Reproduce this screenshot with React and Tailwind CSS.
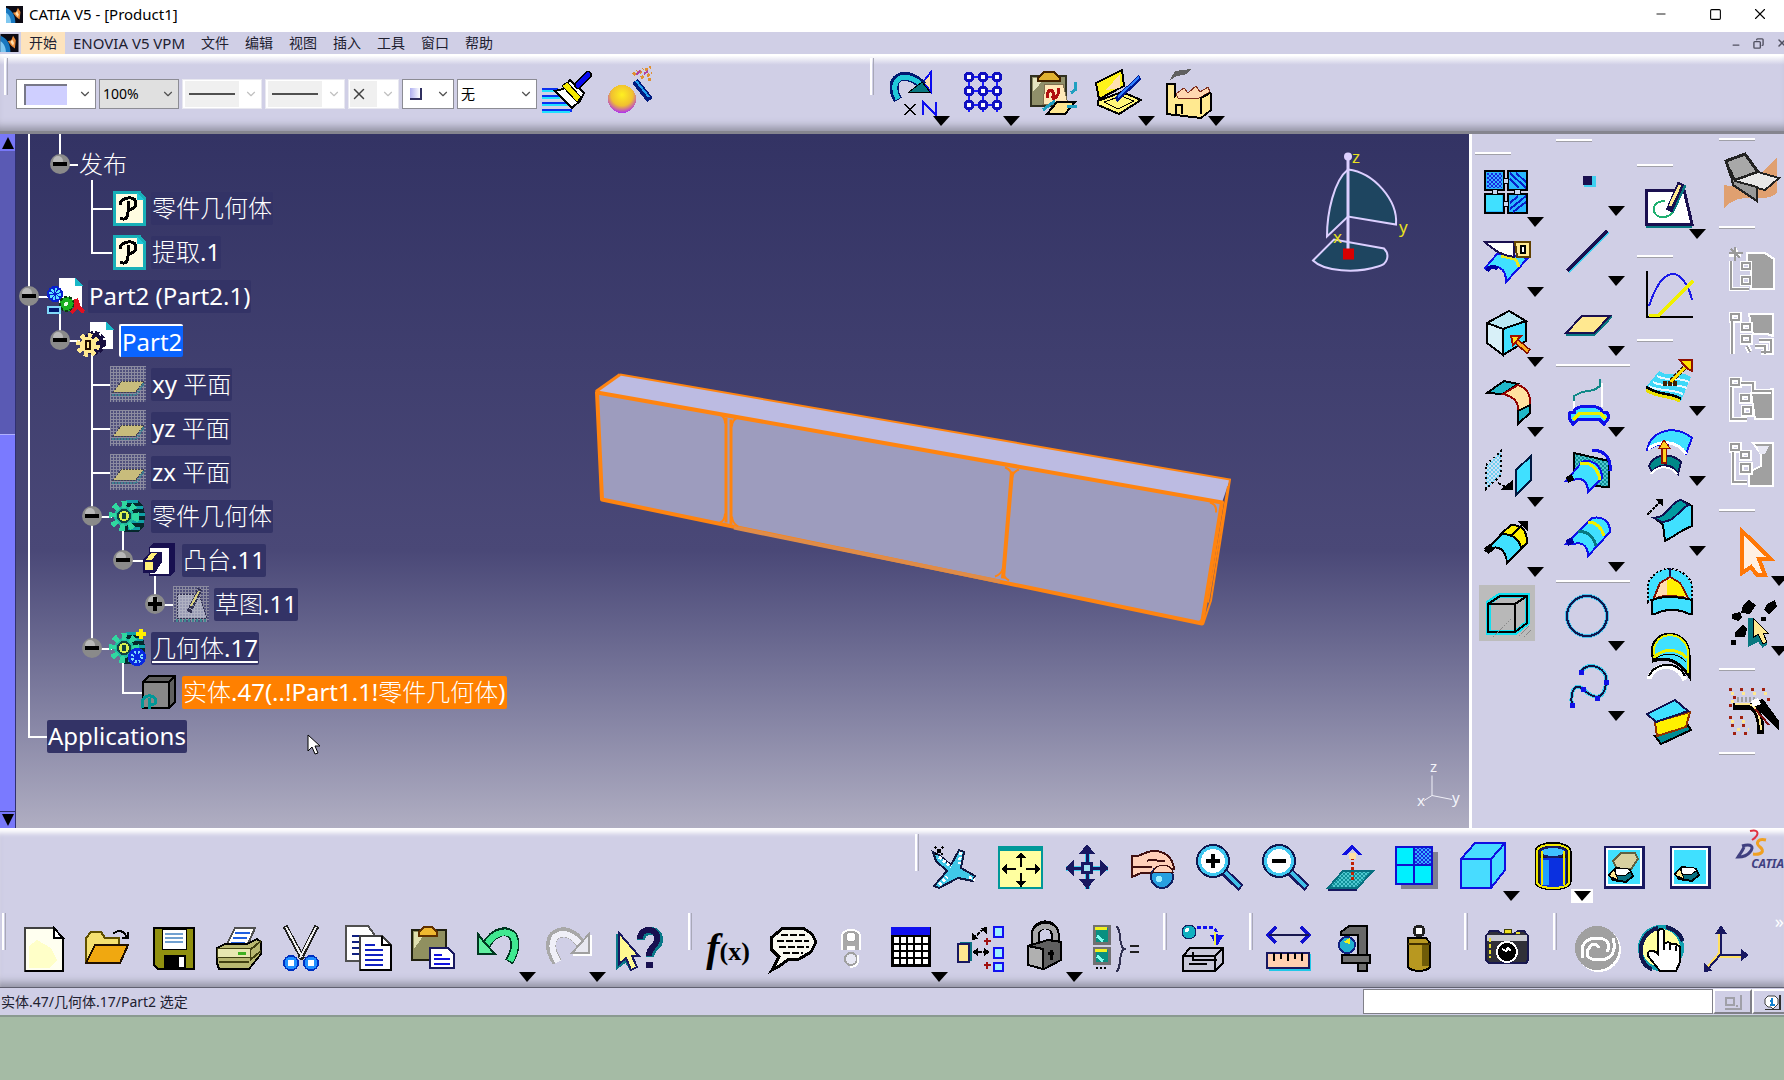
import React, { useState } from 'react';
import { ChevronDown, Copy, Minus, Square, X } from 'lucide-react';
import clsx from 'clsx';

// Every drawing lives on a 48x48 grid
const icons = {
  // --- graphic properties ---
  brush: (
    <>
      <path d="M2 20h16M2 27h18M2 34h26M2 41h30" stroke="#0a30f0" strokeWidth="3" />
      <path d="M2 22h14M2 29h18M2 36h26M2 43h28" stroke="#20e0ff" strokeWidth="2" />
      <path d="M15 22l8-2 7-9 14 13-4 8-8 7z" fill="#fff" stroke="#000" strokeWidth="2" />
      <path d="M22 17l15 16 4-5-14-15z" fill="#f4e800" stroke="#000" />
      <path d="M38 16l10-10" stroke="#000" strokeWidth="8" strokeLinecap="round" />
      <path d="M38 16l10-10" stroke="#0a0af0" strokeWidth="5" strokeLinecap="round" />
    </>
  ),
  wand: (
    <>
      <circle cx="17" cy="30" r="14" fill="url(#ball)" />
      <path d="M30 12l15 19" stroke="#001a80" strokeWidth="7" />
      <path d="M31 12l13 16" stroke="#20a0f0" strokeWidth="2" />
      <path d="M28 6l4-4M34 4l4-4M40 1l6-3M36 9l4-3M42 7l5-3M43 11l4-1" stroke="#e09030" strokeWidth="3" strokeDasharray="3 2" />
      <path d="M31 6l4-4M39 5l4-3" stroke="#b040a0" strokeWidth="2" />
    </>
  ),
  // --- tools ---
  repeat: (
    <>
      <path d="M34 14l8-10v20z" fill="#ffe0b0" stroke="#0a0af0" strokeWidth="2" />
      <path d="M9 32C-3 12 14-2 34 18" fill="none" stroke="#001870" strokeWidth="9" />
      <path d="M9 31C-1 12 14 0 34 18" fill="none" stroke="#20c8d8" strokeWidth="5" />
      <path d="M20 24h21l-8-10z" fill="#087880" stroke="#000" />
      <path d="M16 36l10 11M26 36l-10 11" stroke="#000" strokeWidth="1.5" />
      <path d="M34 47V34l13 13V34" fill="none" stroke="#1010f0" strokeWidth="2" />
    </>
  ),
  grid: (
    <>
      <path d="M10 4v40M24 4v40M38 4v40M5 9h38M5 23h38M5 37h38" stroke="#1a1aff" strokeWidth="2" />
      {[10, 24, 38].map((x) => [9, 23, 37].map((y) => <circle key={`${x}-${y}`} cx={x} cy={y} r="4" fill="#fff" stroke="#1010c0" strokeWidth="3" />))}
    </>
  ),
  catalog: (
    <>
      <path d="M2 8h35v30H2z" fill="#90906a" stroke="#303020" strokeWidth="2" />
      <path d="M4 10h12L4 24z" fill="#e4e4c0" />
      <path d="M9 10l6-6h10l6 6v3H9z" fill="#e0b030" stroke="#402000" strokeWidth="2" />
      <path d="M16 16h18l5 20H14z" fill="#ffe8b8" stroke="#807050" />
      <path d="M18 30c0-12 8-8 6-2s8 0 5-8" fill="none" stroke="#b01010" strokeWidth="3" />
      <path d="M18 46l10-12h18l-10 12z" fill="#ffe890" stroke="#000" strokeWidth="2" />
      <path d="M14 42l12-9M46 14v8l-4 3M38 38h10" stroke="#20a0c0" strokeWidth="3" fill="none" />
    </>
  ),
  workSupport: (
    <>
      <path d="M2 15L28 2l2 16L5 31z" fill="#fff31a" stroke="#000" strokeWidth="2" />
      <path d="M12 22L26 6v14z" fill="#ffe0b0" />
      <path d="M4 33l24-9 19 8-22 14L4 37z" fill="#fff678" stroke="#000" strokeWidth="2" />
      <path d="M10 34l17-6 13 5-16 8z" fill="none" stroke="#000" strokeWidth="1" />
      <path d="M22 32L46 9" stroke="#001890" strokeWidth="5" />
      <path d="M24 29L45 9" stroke="#3080ff" strokeWidth="2" />
    </>
  ),
  factory: (
    <>
      <path d="M6 12l5-9 16-2-4 5-10 2z" fill="#606060" />
      <path d="M3 46V16h8v12l8-6 4 6 8-8 4 8 8-6 4 4v16l-10 8z" fill="#ffe990" stroke="#000" strokeWidth="2" />
      <path d="M12 26l8-6 4 5 8-7 4 6 8-5 2 5-11 6H14z" fill="#ffd8b0" stroke="#803020" />
      <path d="M37 46V30l9-5M12 46v-9h6v9" fill="none" stroke="#000" strokeWidth="2" />
    </>
  ),
  // --- right hand panel ---
  puzzle: (
    <>
      <path d="M2 2h19v19H2zM25 2h19v19H25zM2 25h19v19H2zM25 25h19v19H25z" fill="#28b8ff" stroke="#000" strokeWidth="2" />
      <path d="M4 4h15v15H4z" fill="url(#weave)" />
      <path d="M27 4l16 15M33 4l10 9M27 10l9 9M27 40l16-13M30 43l13-10M27 34l8-7" stroke="#0820c8" strokeWidth="2" />
      <path d="M3 26h16v16H3z" fill="#40e0ff" />
      <path d="M20 9h5v5h-5zM31 20h6v5h-6zM9 20h5v5H9zM20 32h5v5h-5z" fill="#c8d8f0" stroke="#000" />
    </>
  ),
  split: (
    <>
      <path d="M2 29l12-14 31 4-22 24c0-16-10-16-14-14l-5 2z" fill="#40e0ff" stroke="#1010e8" strokeWidth="2" />
      <path d="M18 17l14 3c3 3 3 6 4 8" fill="none" stroke="#e8e820" strokeWidth="3" />
      <path d="M2 3h29v15C18 16 12 12 2 3z" fill="#fff" stroke="#1a1050" strokeWidth="2" />
      <path d="M32 3h15v15H34z" fill="#ffe990" stroke="#604000" strokeWidth="2" />
      <path d="M38 7h4v7h-4z" fill="#fff" stroke="#000" strokeWidth="2" />
      <path d="M4 32c3-5 8-5 11-2" fill="none" stroke="#0000a0" strokeWidth="4" />
    </>
  ),
  extract: (
    <>
      <path d="M4 14L26 2l17 10v20L20 46 4 34z" fill="#40e0ff" stroke="#000" strokeWidth="2" />
      <path d="M4 14L26 2l17 10-23 8z" fill="#b8e8f4" stroke="#000" strokeWidth="2" />
      <path d="M4 14l16 6v26L4 34z" fill="#d8f0f8" stroke="#000" strokeWidth="2" />
      <path d="M46 43L32 31" stroke="#801000" strokeWidth="6" />
      <path d="M45 42L32 31" stroke="#ffb020" strokeWidth="3" />
      <path d="M28 27h10l-8 9z" fill="#ffe020" stroke="#a01000" strokeWidth="2" />
    </>
  ),
  boundary: (
    <>
      <path d="M4 14L21 2l14 3-15 10z" fill="#20b8c8" stroke="#000" strokeWidth="2" />
      <path d="M20 15L35 6c12 4 13 15 12 20L35 32c1-8-3-14-15-17z" fill="#ffe0a0" stroke="#900000" strokeWidth="2" />
      <path d="M35 32l12-6v8L35 45z" fill="#20b8c8" stroke="#000" strokeWidth="2" />
    </>
  ),
  symmetry: (
    <>
      <path d="M3 16L18 2v24L3 40z" fill="url(#weaveLight)" stroke="#000" strokeWidth="2" strokeDasharray="2 3" />
      <path d="M33 21L48 7v24L33 46z" fill="#40e0ff" stroke="#001840" strokeWidth="2" />
      <path d="M15 34l8 4" stroke="#000" strokeWidth="2" strokeDasharray="3 2" />
      <path d="M20 40h9V33z" fill="#000" stroke="#000" strokeWidth="2" />
    </>
  ),
  extrapolate: (
    <>
      <path d="M2 32L28 6c10 0 16 4 16 18L24 44c-1-14-10-18-16-14z" fill="#40e0ff" stroke="#000" strokeWidth="2" />
      <path d="M18 15L28 6c10 0 16 4 16 18l-6 5c-2-10-10-14-20-14z" fill="#fff000" stroke="#000" strokeWidth="2" />
      <path d="M28 17L40 5" stroke="#000" strokeWidth="2" />
      <path d="M34 2h11v11z" fill="#000" />
      <path d="M3 32l6-4" stroke="#000" strokeWidth="7" />
    </>
  ),
  solid: (
    <>
      <path d="M5 14L17 6h27v28L33 43H5z" fill="#b8b8b8" stroke="#10e0f0" strokeWidth="5" />
      <path d="M5 15h27v28H5zM5 15L17 7h27v27L32 43M32 15L44 7" fill="none" stroke="#000" strokeWidth="2" />
      <path d="M10 48l18-18M36 47l10-10M41 48l8-8" stroke="#888" strokeDasharray="2 1" />
    </>
  ),
  point: (
    <>
      <path d="M20 18h12v11H20z" fill="#40d0f0" />
      <path d="M19 18h9v9h-9z" fill="#1a1050" />
    </>
  ),
  line: (
    <>
      <path d="M4 44L44 4" stroke="#40d0f0" strokeWidth="4" />
      <path d="M3 43L43 3" stroke="#1a1050" strokeWidth="3" />
    </>
  ),
  plane: (
    <>
      <path d="M2 36h28L47 18" fill="none" stroke="#087880" strokeWidth="4" />
      <path d="M2 35L18 18h28L30 35z" fill="#ffe890" stroke="#1a1050" strokeWidth="2" />
    </>
  ),
  sweep: (
    <>
      <path d="M10 23v-6l8-4 12-2 6-4V0" fill="none" stroke="#108888" strokeWidth="2" />
      <path d="M10 22v12M38 4v24" stroke="#fff" strokeWidth="2" />
      <path d="M6 33h4c0-8 28-8 28 0h5c3 5 1 8-3 12l-5-5H14l-5 5c-4-4-5-8-3-12z" fill="#40e0ff" stroke="#1010e8" strokeWidth="3" />
      <path d="M9 41l7-7h20l6 6" fill="none" stroke="#e8f000" strokeWidth="3" />
    </>
  ),
  join: (
    <>
      <path d="M10 4l35 8v26l-16-1L10 26z" fill="url(#teal)" stroke="#000" strokeWidth="2" />
      <path d="M28 2c8-2 20 4 18 20" fill="none" stroke="#1010e8" strokeWidth="3" />
      <path d="M2 32L18 13c10-4 20 4 20 16L24 43c0-12-8-15-14-12z" fill="#40e0ff" stroke="#1010e8" strokeWidth="2" />
      <path d="M16 15c10-3 18 4 20 16" fill="none" stroke="#f0f000" strokeWidth="3" />
      <path d="M3 31l6-3" stroke="#000" strokeWidth="6" />
    </>
  ),
  offset: (
    <>
      <path d="M2 30L28 4c10-2 18 2 18 14L24 42c0-12-8-14-14-12z" fill="#40e0ff" stroke="#1010e8" strokeWidth="2" />
      <path d="M14 18c10-2 16 6 18 14" fill="none" stroke="#087880" strokeWidth="3" />
      <path d="M24 8c8 0 14 6 16 14" fill="none" stroke="#f0f000" strokeWidth="3" />
      <path d="M3 29l6-3" stroke="#0000a0" strokeWidth="6" />
    </>
  ),
  circle: (
    <>
      <circle cx="23" cy="23" r="20" fill="none" stroke="#50c8f0" strokeWidth="4" />
      <circle cx="23" cy="23" r="20" fill="none" stroke="#101850" strokeWidth="2" />
    </>
  ),
  spline: (
    <>
      <path d="M17 9C24-4 46 6 42 20 40 38 30 36 20 27S6 30 8 43" fill="none" stroke="#40d0f0" strokeWidth="4" />
      <path d="M17 9C24-4 46 6 42 20 40 38 30 36 20 27S6 30 8 43" fill="none" stroke="#101040" strokeWidth="2" />
      <path d="M15 7h5v5h-5zM40 17h5v5h-5zM31 33h5v5h-5zM17 24h5v5h-5zM6 40h5v5H6z" fill="#1010e8" />
    </>
  ),
  sketch: (
    <>
      <path d="M1 9h38l8 34H1z" fill="#fff" stroke="#1a1050" strokeWidth="3" />
      <path d="M1 46h46" stroke="#087880" strokeWidth="2" />
      <path d="M20 20c-16 0-14 18 0 16 4-1 7-3 8-6" fill="none" stroke="#20b070" strokeWidth="2" />
      <path d="M25 30L38 3" stroke="#087880" strokeWidth="8" />
      <path d="M24 30L36 2" stroke="#1a1050" strokeWidth="7" />
      <path d="M25 25L35 4" stroke="#ffe990" strokeWidth="3" />
    </>
  ),
  law: (
    <>
      <path d="M2 1v46h46" fill="none" stroke="#000" strokeWidth="2" />
      <path d="M4 36C12 12 20 4 28 4s16 12 19 26" fill="none" stroke="#1a1ae8" strokeWidth="2" />
      <path d="M4 45h10L48 11" fill="none" stroke="#f0f000" strokeWidth="3" />
    </>
  ),
  extrude: (
    <>
      <path d="M1 29L14 13c10 8 20-3 32 6L36 43C24 35 14 40 1 29z" fill="#40d8f8" />
      <path d="M8 24c10 6 20 0 34 6M12 18c10 6 20 0 32 6M4 28c10 6 20 2 34 8" fill="none" stroke="#e8f8ff" strokeWidth="2" />
      <path d="M1 29c12 9 22 5 35 12" fill="none" stroke="#000" strokeWidth="3" />
      <path d="M1 32c12 8 22 5 34 11" fill="none" stroke="#e8e000" strokeWidth="3" />
      <path d="M18 25h14M26 23L42 7" stroke="#402000" strokeWidth="5" strokeDasharray="4 1" />
      <path d="M26 24L42 7" stroke="#ffe000" strokeWidth="3" />
      <path d="M35 2h12v11l-4-2-5-5z" fill="#ffe000" stroke="#901000" strokeWidth="2" />
    </>
  ),
  thick: (
    <>
      <path d="M2 22C6 2 30-4 47 10l-6 16C34 14 18 12 2 22z" fill="#40e0ff" stroke="#1010e8" strokeWidth="2" />
      <path d="M3 21c12-10 30-8 38 5" fill="none" stroke="#fff" strokeWidth="3" />
      <path d="M4 38c4-12 22-14 32-4l-3 12c-4-10-18-12-26-2z" fill="#008888" stroke="#101050" strokeWidth="2" />
      <path d="M6 46c8-10 20-8 26 0" fill="none" stroke="#fff" strokeWidth="2" />
      <path d="M19 36V18" stroke="#901000" strokeWidth="6" />
      <path d="M19 34V18" stroke="#ffd020" strokeWidth="3" />
      <path d="M14 20l5-8 6 8z" fill="#ffd020" stroke="#901000" />
    </>
  ),
  sweptSurface: (
    <>
      <path d="M10 20C24 19 24 4 36 2l11 6v20C36 32 30 38 20 43l-2-16z" fill="#40e0ff" stroke="#000" strokeWidth="2" />
      <path d="M9 20C24 19 24 4 36 2l8 5C34 11 30 24 17 24z" fill="#009aa0" stroke="#101050" strokeWidth="2" />
      <path d="M2 17L15 4" stroke="#000" strokeWidth="2" strokeDasharray="3 1" />
      <path d="M10 1h8v8z" fill="#000" />
    </>
  ),
  fill: (
    <>
      <path d="M3 34V16C10-4 38-4 47 16v18l-8-6H11z" fill="#40e0ff" stroke="#000" strokeWidth="2" strokeDasharray="2 2" />
      <path d="M25 0v10" stroke="#101050" strokeWidth="2" />
      <path d="M8 32L15 15l10-6 10 6 9 17c-10-6-26-6-36 0z" fill="#ffdcb0" stroke="#801000" strokeWidth="2" />
      <path d="M22 27V12l5-1 8 5 6 12z" fill="#fff000" />
      <path d="M7 32c10-4 26-4 40 0v14c-8 0-6-4-20-4s-12 4-20 4z" fill="#40e0ff" stroke="#000" strokeWidth="2" />
    </>
  ),
  blend: (
    <>
      <path d="M8 24C2-6 44-6 44 22v21C34 28 22 23 8 28z" fill="#40e0ff" stroke="#000" strokeWidth="3" />
      <path d="M9 22C6-4 42-4 43 20v20" fill="none" stroke="#e8f000" strokeWidth="2" />
      <path d="M9 25c8-10 24-10 33 0" fill="none" stroke="#e8f000" strokeWidth="3" />
      <path d="M9 27c8-8 24-8 32 2" fill="none" stroke="#000" strokeWidth="1" />
      <path d="M4 46c4-16 28-18 36 1" fill="none" stroke="#fff" strokeWidth="5" />
      <path d="M4 43c6-14 28-16 36 0" fill="none" stroke="#000" strokeWidth="2" />
    </>
  ),
  multiSection: (
    <>
      <path d="M10 38l32-12 4 6-30 14z" fill="#008c94" stroke="#000" strokeWidth="2" />
      <path d="M10 24l35-10-4 15-29 9z" fill="#fff000" stroke="#903000" strokeWidth="2" />
      <path d="M2 16L30 2l13 11-32 11z" fill="#40e0ff" stroke="#101050" strokeWidth="2" />
    </>
  ),
  workbench: (
    <>
      <path d="M-3 52V28L20 32 50 0v36C38 48 10 32-3 52z" fill="#e0a070" />
      <path d="M-1 4L18-3l13 18L6 24z" fill="#a8a8a8" stroke="#222" strokeWidth="3" />
      <path d="M6 24l25-9 21 6-14 12-16-4z" fill="#e8e8e8" stroke="#222" strokeWidth="2" />
      <path d="M3 12l5 12 22 6v14L6 28z" fill="#999" stroke="#222" strokeWidth="2" />
    </>
  ),
  diskNew: (
    <>
      <path d="M20 8h18l9 6v30H24V22h-4z" fill="#a0a0a0" stroke="#fff" strokeWidth="2" />
      <path d="M4 16v28h18M8 4l3 6M2 10h12M15 18h8v6h-8zM15 32h8v7h-8z" fill="#d0cfe6" stroke="#fff" strokeWidth="4" />
      <path d="M4 16v28h18M8 2v14M2 8h14M4 4l9 9M15 18h8v6h-8zM15 32h8v7h-8z" fill="none" stroke="#9a9a9a" strokeWidth="2" />
    </>
  ),
  diskLink: (
    <>
      <path d="M22 4h24v22l-6-2H26z" fill="#a0a0a0" stroke="#fff" strokeWidth="2" />
      <path d="M4 4h8v6H4zM5 10v34M15 14h8v6h-8zM15 26h8v6h-8zM20 36l3 6M32 30h12v12H34M28 36h10v8" fill="none" stroke="#fff" strokeWidth="5" />
      <path d="M4 4h8v6H4zM5 10v34M15 14h8v6h-8zM15 26h8v6h-8zM20 36l3 6M32 30h12v12H34M28 36h10v8" fill="none" stroke="#9a9a9a" strokeWidth="2" />
    </>
  ),
  diskOpen: (
    <>
      <path d="M24 18l22-4v30H28z" fill="#a0a0a0" stroke="#fff" strokeWidth="2" />
      <path d="M4 4h8v6H4zM4 12v32h16M14 20h8v6h-8zM16 32h8v7h-8zM14 8h12v8h18" fill="none" stroke="#fff" strokeWidth="5" />
      <path d="M4 4h8v6H4zM4 12v32h16M14 20h8v6h-8zM16 32h8v7h-8zM14 8h12v8h18" fill="none" stroke="#9a9a9a" strokeWidth="2" />
    </>
  ),
  diskSave: (
    <>
      <path d="M26 3h20v43H22V32l12-6V14z" fill="#a0a0a0" stroke="#fff" strokeWidth="2" />
      <path d="M30 6h12l-4 8h-5z" fill="#e8e8f4" />
      <path d="M4 4h8v6H4zM6 12v30h14M14 12h8v6h-8zM14 24h9v8h-9z" fill="none" stroke="#fff" strokeWidth="5" />
      <path d="M4 4h8v6H4zM6 12v30h14M14 12h8v6h-8zM14 24h9v8h-9z" fill="none" stroke="#9a9a9a" strokeWidth="2" />
    </>
  ),
  select: <path d="M15 3v42l9-6 6 8h8l-6-16h12z" fill="#fff0e4" stroke="#ff7808" strokeWidth="4" />,
  selectAll: (
    <>
      <path d="M22 2l7 5-6 9-9-1 2-8zM40 6l8-4 2 6-8 9-5-5zM5 16l8-2 2 5-4 4-6-2zM8 34l8-7 4 4-2 8H8zM4 42h5v5H4zM34 19h5v4h-5z" fill="#000" />
      <path d="M24 20v24l8-4 6 8" fill="none" stroke="#087880" strokeWidth="6" />
      <path d="M26 20v20l5-4 5 10 4-2-4-9h5z" fill="#ffe990" stroke="#000" strokeWidth="1" />
    </>
  ),
  sparkle: (
    <>
      <path d="M2 2h40M6 10h8M2 18h4M40 12h8M2 30h22M4 38h16M6 46h18" stroke="#a02010" strokeWidth="3" strokeDasharray="3 8" />
      <path d="M4 6h38M4 34h20M10 42h12M4 14h8" stroke="#ffe890" strokeWidth="3" strokeDasharray="3 8" />
      <path d="M10 12h20" stroke="#a0a0a0" strokeWidth="5" strokeDasharray="2 2" />
      <path d="M6 19h16c8 2 12 12 12 28" fill="none" stroke="#000" strokeWidth="7" />
      <path d="M8 17h14c8 2 11 12 12 26" fill="none" stroke="#ffe890" strokeWidth="2" />
      <path d="M26 14l10-2 16 22v10L30 22z" fill="#000" />
      <path d="M24 14l7-3 3 6-8 3z" fill="#fff" />
      <path d="M28 22l14 16" stroke="#801010" strokeWidth="2" />
    </>
  ),
  // --- view ---
  fly: (
    <>
      <path d="M2 9l6 3 12 10 8-15 5 2-3 16 14 8-2 5-15-3L8 45l-5-2 13-15L5 18z" fill="#40c8e8" stroke="#101840" strokeWidth="2" />
      <path d="M8 14l12 10M30 9l-2 12M8 42l8-8M38 34l6 3" stroke="#fff" strokeWidth="3" strokeDasharray="3 2" />
      <path d="M4 4l8 8M12 4l-8 8" stroke="#000" strokeWidth="2" strokeDasharray="2 1" />
    </>
  ),
  fit: (
    <>
      <path d="M2 4h43v41H2z" fill="#ffffa0" stroke="#009898" strokeWidth="2" />
      <path d="M2 3h43v5H2z" fill="#009898" />
      <path d="M24 10v14M24 30v14M5 26h14M29 26h14" stroke="#000" strokeWidth="2" />
      <path d="M24 9l-5 6h10zM24 44l-5-6h10zM4 26l6-5v10zM44 26l-6-5v10z" fill="#000" />
    </>
  ),
  pan: (
    <>
      <path d="M24 4v42M3 25h42" stroke="#40d0f0" strokeWidth="5" />
      <path d="M24 4v42M3 25h42" stroke="#181860" strokeWidth="3" />
      <path d="M24 1l-8 10h16zM24 46l-8-10h16zM2 25l9-8v16zM46 25l-9-8v16z" fill="#181860" />
      <path d="M18 19h12v12H18z" fill="#181860" />
      <path d="M21 22h6v6h-6z" fill="#a0e0f0" />
    </>
  ),
  rotate: (
    <>
      <path d="M3 13c8 2 12-5 22-5s19 6 20 18H32l-8 4H12L3 34z" fill="#ffd0b8" stroke="#401010" strokeWidth="2" />
      <path d="M18 18c6-4 12 2 18 0M3 24h20" fill="none" stroke="#401010" strokeWidth="2" />
      <circle cx="33" cy="34" r="11" fill="#28a0e0" stroke="#102060" strokeWidth="2" />
      <path d="M24 29c4-10 18-8 20 0z" fill="#ffd0b8" stroke="#401010" />
      <circle cx="30" cy="36" r="3" fill="#a0f0ff" />
    </>
  ),
  zoomIn: (
    <>
      <path d="M28 28l18 17" stroke="#181860" strokeWidth="8" />
      <path d="M29 28l16 16" stroke="#40c0e8" strokeWidth="3" />
      <circle cx="18" cy="18" r="14" fill="#fff" stroke="#40c8f0" strokeWidth="4" />
      <circle cx="18" cy="18" r="16" fill="none" stroke="#101850" strokeWidth="2" />
      <path d="M18 11v14M11 18h14" stroke="#000" strokeWidth="4" />
    </>
  ),
  zoomOut: (
    <>
      <path d="M28 28l18 17" stroke="#181860" strokeWidth="8" />
      <path d="M29 28l16 16" stroke="#40c0e8" strokeWidth="3" />
      <circle cx="18" cy="18" r="14" fill="#fff" stroke="#40c8f0" strokeWidth="4" />
      <circle cx="18" cy="18" r="16" fill="none" stroke="#101850" strokeWidth="2" />
      <path d="M11 18h14" stroke="#000" strokeWidth="4" />
    </>
  ),
  normalView: (
    <>
      <path d="M1 45L16 28h30L30 45z" fill="url(#teal)" stroke="#087080" strokeWidth="2" />
      <path d="M1 47h29" stroke="#181860" strokeWidth="2" />
      <path d="M25 37V10" stroke="#c02000" strokeWidth="3" strokeDasharray="3 2" />
      <path d="M25 1L15 12h4l6-6 6 6h4z" fill="#1010e0" />
      <path d="M22 10h7v6h-7z" fill="#ffe0a0" />
    </>
  ),
  multiView: (
    <>
      <path d="M8 9h37v37H8z" fill="#808090" />
      <path d="M3 4h36v37H3z" fill="#00f0ff" stroke="#1010d0" strokeWidth="2" />
      <path d="M22 5h16v17H22z" fill="url(#weave)" />
      <path d="M21 4v37M3 22h36" stroke="#1010d0" strokeWidth="2" />
    </>
  ),
  isoView: (
    <>
      <path d="M2 16L16 0h30v27L32 45H2z" fill="#48dcff" stroke="#1010e0" strokeWidth="2" />
      <path d="M2 16h30v29M32 16L46 0" fill="none" stroke="#1010e0" strokeWidth="2" />
    </>
  ),
  shading: (
    <>
      <path d="M6 8C6-2 40-2 40 8v31c0 9-34 9-34 0z" fill="#181820" stroke="#000" strokeWidth="3" />
      <path d="M10 15h26v26c-4 6-22 6-26 0z" fill="#0a30e0" />
      <path d="M13 17h6v25h-6z" fill="#20a0ff" />
      <ellipse cx="23" cy="9" rx="13" ry="5" fill="#40c0ff" stroke="#181860" strokeWidth="2" />
      <path d="M7 9C7-1 39-1 39 9v30c0 8-32 8-32 0zM12 8v34M34 8v34" fill="none" stroke="#f0e800" strokeWidth="2" />
    </>
  ),
  hideShow: (
    <>
      <path d="M4 4h38v40H4z" fill="#40e0ff" stroke="#181860" strokeWidth="3" />
      <path d="M6 6h34v36H6z" fill="none" stroke="#fff" strokeWidth="2" />
      <path d="M12 18l8-8h14l3 6-7 10H16z" fill="#d8d0a0" stroke="#606040" strokeWidth="2" />
      <path d="M8 32l7-7 14 2 3 6-7 6-13-2z" fill="#087080" stroke="#000" strokeWidth="2" />
      <path d="M14 25h12l4 3-5 4H14z" fill="#fff" stroke="#000" />
      <path d="M8 33l5-7 4 11z" fill="#ffe990" stroke="#000" />
    </>
  ),
  swapSpace: (
    <>
      <path d="M4 4h38v40H4z" fill="#40e0ff" stroke="#181860" strokeWidth="3" />
      <path d="M6 6h34v36H6z" fill="none" stroke="#fff" strokeWidth="2" />
      <path d="M8 31l7-7 14 2 3 6-7 6-13-2z" fill="#087080" stroke="#000" strokeWidth="2" />
      <path d="M14 24h12l4 3-5 4H14z" fill="#fff" stroke="#000" />
      <path d="M8 32l5-7 4 11z" fill="#ffe990" stroke="#000" />
    </>
  ),
  // --- standard ---
  newFile: (
    <>
      <path d="M5 4h29l9 10v33H5z" fill="#fffff0" stroke="#404040" strokeWidth="2" />
      <path d="M9 22l8-6 14 8 6 12-8 8H9z" fill="#ffffc8" />
      <path d="M34 4l9 10h-9z" fill="#fff" stroke="#000" strokeWidth="2" />
      <path d="M5 47h38V14" fill="none" stroke="#000" strokeWidth="2" />
    </>
  ),
  open: (
    <>
      <path d="M1 38V14l5-6h10l4 6h14v8" fill="#f4e070" stroke="#605000" strokeWidth="2" />
      <path d="M1 39l9-18h33l-8 18z" fill="#f0a810" stroke="#201000" strokeWidth="2" />
      <path d="M28 10c6-6 12-2 14 4M37 14h6V8" fill="none" stroke="#000" strokeWidth="2" />
    </>
  ),
  save: (
    <>
      <path d="M4 4h40v41H8l-4-4z" fill="#909010" stroke="#000" strokeWidth="2" />
      <path d="M12 5h24v20H12z" fill="#fff" stroke="#000" />
      <path d="M15 10h18M15 14h18M15 18h18" stroke="#70a0d0" strokeWidth="2" />
      <path d="M14 31h22v14H14z" fill="#000" />
      <path d="M29 33h5v10h-5z" fill="#fff" />
    </>
  ),
  print: (
    <>
      <path d="M11 22L20 4h20l-8 18z" fill="#fff" stroke="#505050" strokeWidth="2" />
      <path d="M20 9h15M18 14h14M16 19h14" stroke="#2060e0" strokeWidth="2" />
      <path d="M2 24l8-4h22l10-5 4 3v12L34 45H4l-2-6z" fill="#b8b870" stroke="#000" strokeWidth="2" />
      <path d="M2 24h33v9H2z" fill="#e8e8b0" stroke="#404010" strokeWidth="1" />
      <path d="M4 38h30M35 26l11-9M35 36l11-9" stroke="#404010" strokeWidth="2" />
      <path d="M23 28h8v3h-8z" fill="#40b020" />
    </>
  ),
  cut: (
    <>
      <path d="M5 2l18 33M37 2L20 35" stroke="#202020" strokeWidth="5" />
      <path d="M6 3l16 30M36 3L20 34" stroke="#f0f0f0" strokeWidth="2" />
      <circle cx="11" cy="39" r="6" fill="none" stroke="#0030c0" strokeWidth="4" />
      <circle cx="31" cy="39" r="6" fill="none" stroke="#0030c0" strokeWidth="4" />
      <circle cx="11" cy="39" r="5" fill="#fff" stroke="#2090ff" strokeWidth="3" />
      <circle cx="31" cy="39" r="5" fill="#fff" stroke="#2090ff" strokeWidth="3" />
    </>
  ),
  copy: (
    <>
      <path d="M1 2h22l6 8v27H1z" fill="#fff" stroke="#505050" strokeWidth="2" />
      <path d="M7 12h10M7 18h10M7 24h10M7 30h8" stroke="#102080" strokeWidth="2" />
      <path d="M15 12h22l9 9v25H15z" fill="#fff" stroke="#404040" strokeWidth="2" />
      <path d="M37 12v9h9M15 46h31V21" fill="none" stroke="#000" strokeWidth="2" />
      <path d="M20 21h10M20 26h18M20 31h18M20 36h18M20 41h18" stroke="#1020c0" strokeWidth="2" />
    </>
  ),
  paste: (
    <>
      <path d="M2 6h34v30H2z" fill="#909060" stroke="#202010" strokeWidth="2" />
      <path d="M4 8h12L4 25z" fill="#e0e0b0" />
      <path d="M9 12V8l5-5h8l5 5v4z" fill="#f0b830" stroke="#603000" strokeWidth="2" />
      <path d="M20 24h18l6 6v14H20z" fill="#fff" stroke="#181860" strokeWidth="2" />
      <path d="M24 31h8M24 35h16M24 40h16" stroke="#1010e0" strokeWidth="2" />
    </>
  ),
  undo: (
    <>
      <path d="M10 23C20 4 34 6 38 12c4 8 2 16-4 26" fill="none" stroke="#003820" strokeWidth="9" />
      <path d="M10 23C20 5 34 7 38 12c4 8 2 16-3 25" fill="none" stroke="#40e890" strokeWidth="6" />
      <path d="M3 10l6 8 11 12H3z" fill="#60f0a0" stroke="#003820" strokeWidth="2" />
    </>
  ),
  redo: (
    <>
      <path d="M38 23C28 6 16 6 9 12c-6 8-2 18 3 26" fill="none" stroke="#a8a8a8" strokeWidth="10" />
      <path d="M37 24C28 8 16 8 10 13c-5 8-2 16 3 25" fill="none" stroke="#f0f0f8" strokeWidth="6" />
      <path d="M44 10v19H27z" fill="#e8e8f0" stroke="#a0a0a0" strokeWidth="2" />
      <path d="M46 11v20H28" fill="none" stroke="#fff" strokeWidth="2" />
    </>
  ),
  whatsThis: (
    <>
      <path d="M3 10v32l8-6 6 10" fill="none" stroke="#087888" strokeWidth="4" />
      <path d="M4 9v31l7-6 5 12 6-3-5-11h7z" fill="#fff890" stroke="#181860" strokeWidth="2" />
      <path d="M26 16c0-12 19-12 18 0 0 8-9 7-9 17" fill="none" stroke="#087888" strokeWidth="8" />
      <path d="M25 15c0-12 18-12 17 0 0 8-8 7-8 17" fill="none" stroke="#181050" strokeWidth="6" />
      <path d="M31 38h7v6h-7z" fill="#181050" />
    </>
  ),
  comment: (
    <>
      <path d="M14 4h20l9 6 4 8-5 10-12 7H20l-8 6-9 5 7-13-8-8V14z" fill="#f8f8f0" stroke="#000" strokeWidth="3" />
      <path d="M12 11h24M8 17h32M10 23h30M14 29h20" stroke="#000" strokeWidth="2" strokeDasharray="7 2" />
    </>
  ),
  traffic: (
    <>
      <path d="M14 26V12c0-8 18-8 18 0v14" fill="#a8a8a8" stroke="#fff" strokeWidth="2" />
      <circle cx="23" cy="13" r="5" fill="#fff" stroke="#a0a0a0" />
      <path d="M19 24h8" stroke="#fff" strokeWidth="4" />
      <circle cx="23" cy="35" r="6" fill="#e8e8f4" stroke="#a0a0a0" strokeWidth="2" />
      <path d="M30 31c2 8-2 12-8 12" fill="none" stroke="#fff" strokeWidth="2" />
    </>
  ),
  table: (
    <>
      <path d="M5 4h37v37H5z" fill="#fff" stroke="#000" strokeWidth="3" />
      <path d="M4 3h39v8H4z" fill="#1010f0" />
      <path d="M13 11v30M20 11v30M27 11v30M35 11v30M4 12h39M4 20h39M4 27h39M4 34h39" stroke="#000" strokeWidth="2" />
    </>
  ),
  structure: (
    <>
      <path d="M3 18h12v19H3z" fill="#087080" />
      <path d="M1 20h11v18H1z" fill="#ffe890" stroke="#181860" strokeWidth="2" />
      <path d="M16 28h16M16 14L28 4" stroke="#000" strokeWidth="2" strokeDasharray="4 1" />
      <path d="M15 28l6-4v8zM33 28l-6-4v8zM15 16v-7l6 6zM30 3v7l-7-6z" fill="#000" />
      <path d="M27 17h7M30 14v7M27 41h7M30 38v7" stroke="#a01010" strokeWidth="2" />
      <path d="M37 3h9v10h-9zM37 24h9v10h-9zM37 39h9v8h-9z" fill="#a0f0ff" stroke="#1010f0" strokeWidth="2" />
    </>
  ),
  lock: (
    <>
      <path d="M13 22V10c2-12 18-12 20-1v10" fill="none" stroke="#000" strokeWidth="9" />
      <path d="M13 22V10c2-10 18-10 20-1v9" fill="none" stroke="#a8a8a8" strokeWidth="5" />
      <path d="M6 22l20-6 13 2v18L22 45 6 41z" fill="#606060" stroke="#000" strokeWidth="2" />
      <path d="M6 22l15 3v20L6 41z" fill="#b0b0b0" stroke="#000" strokeWidth="2" />
      <path d="M29 26v10M26 29h6" stroke="#000" strokeWidth="3" />
    </>
  ),
  equivalent: (
    <>
      <path d="M2 2h15v17H2zM2 24h15v15H2z" fill="#089080" stroke="#707070" strokeWidth="3" />
      <path d="M3 4h12M3 26h12" stroke="#f0f020" strokeWidth="3" />
      <path d="M5 12l6 5M5 32l6 5" stroke="#80fff0" strokeWidth="3" />
      <path d="M4 44h12" stroke="#000" strokeWidth="2" strokeDasharray="2 2" />
      <path d="M24 3c6 0 2 20 8 22-6 2-2 22-8 22" fill="none" stroke="#303050" strokeWidth="2" />
      <path d="M38 22h9M38 28h9" stroke="#202020" strokeWidth="2" />
    </>
  ),
  translate: (
    <>
      <path d="M2 32l7-8h33v15l-8 8H2z" fill="#c8c8d8" stroke="#000" strokeWidth="2" />
      <path d="M2 32h32v15M34 32l8-8M12 28v8h24M8 40h18" fill="none" stroke="#000" strokeWidth="2" />
      <circle cx="8" cy="8" r="7" fill="#10b0c0" stroke="#102060" />
      <circle cx="6" cy="6" r="2" fill="#fff" />
      <path d="M16 3h14c4 0 6 4 6 10" fill="none" stroke="#1010f0" strokeWidth="3" strokeDasharray="4 2" />
      <path d="M29 11h14l-7 11z" fill="#1010f0" />
      <path d="M34 8v13" stroke="#f0f040" strokeWidth="2" />
    </>
  ),
  measure: (
    <>
      <path d="M11 3l-8 8 8 8M36 3l8 8-8 8" fill="none" stroke="#1010d0" strokeWidth="3" />
      <path d="M4 11h40" stroke="#181850" strokeWidth="2" />
      <path d="M4 30h42v17H4z" fill="#20c8e8" />
      <path d="M2 29h42v15H2z" fill="#ffd0b0" stroke="#181860" strokeWidth="2" />
      <path d="M9 29v8M16 29v6M23 29v8M30 29v6M37 29v8" stroke="#000" strokeWidth="2" />
    </>
  ),
  measureItem: (
    <>
      <path d="M11 8l8-6h18v36H12v-6h16V11H11z" fill="#686868" stroke="#000" strokeWidth="2" />
      <path d="M12 31h28v8H12zM28 39h9v8h-9z" fill="#707070" stroke="#000" strokeWidth="2" />
      <circle cx="17" cy="21" r="8" fill="#20b0d0" stroke="#102080" strokeWidth="2" />
      <path d="M13 18l7-4v6z" fill="#f0f020" />
    </>
  ),
  inertia: (
    <>
      <path d="M13 14h18l4 5v24c-4 5-18 5-22 0V17z" fill="#b89820" stroke="#000" strokeWidth="2" />
      <path d="M27 20h7v22h-7z" fill="#705c08" />
      <path d="M13 20h22" stroke="#403000" strokeWidth="2" />
      <circle cx="24" cy="7" r="5" fill="#fff" stroke="#202020" strokeWidth="3" />
    </>
  ),
  camera: (
    <>
      <path d="M2 12l4-5h8l4 3h12l4-3h6l4 5v24l-2 3H5l-3-3z" fill="#303038" stroke="#181850" strokeWidth="2" />
      <path d="M3 11h40v6H3z" fill="#c8c8d0" />
      <path d="M20 5h7v4h-7z" fill="#f0e020" stroke="#404000" />
      <path d="M6 14v20M32 9h6" stroke="#e8e030" strokeWidth="2" strokeDasharray="4 2" />
      <circle cx="23" cy="28" r="10" fill="#000" stroke="#fff" strokeWidth="2" />
      <path d="M18 25l4 2 2-3 3 3" fill="none" stroke="#fff" strokeWidth="2" />
    </>
  ),
  update: (
    <>
      <circle cx="26" cy="26" r="22" fill="#fff" />
      <circle cx="24" cy="24" r="22" fill="#a0a0a0" />
      <path d="M10 34C6 20 14 14 24 14s14 6 10 14M40 14c4 14-2 22-14 22s-14-6-10-12 8-4 10 0" fill="none" stroke="#fff" strokeWidth="3" />
    </>
  ),
  manualUpdate: (
    <>
      <circle cx="23" cy="24" r="21" fill="#ffffa0" stroke="#10a0b0" strokeWidth="4" />
      <path d="M20 4C-2 10-2 40 14 45M28 3c8 2 14 6 17 14" fill="none" stroke="#101850" strokeWidth="4" />
      <path d="M20 28V8c0-4 6-4 6 0v12l4-2 4 2 4 0 4 3v15l-4 9H22L10 32c-2-5 4-8 10-2z" fill="#fff" stroke="#000" strokeWidth="2" />
      <path d="M26 20v6M32 20v6M38 22v5" stroke="#000" strokeWidth="2" />
    </>
  ),
  axis: (
    <>
      <path d="M16 30V6M16 30L4 44M16 32h26" stroke="#ffe060" strokeWidth="3" />
      <path d="M18 30V6M18 30L4 46M18 31h24" stroke="#181860" strokeWidth="2" />
      <path d="M18 1l-6 9h12zM46 31l-8-6v12zM1 48v-9l8 8z" fill="#181860" />
    </>
  ),
};

const Icon = ({ name, className = 'size-12' }) => (
  <svg viewBox="0 0 48 48" fill="none" shapeRendering="crispEdges" className={clsx('shrink-0 overflow-visible', className)} aria-hidden="true">
    {icons[name]}
  </svg>
);

// Formula is plain text in a serif italic
const FormulaIcon = () => (
  <span className="flex size-12 items-center justify-center font-['Liberation_Serif',serif] text-black" aria-hidden="true">
    <span className="text-[40px] font-bold italic leading-none">f</span>
    <span className="pt-2 text-[26px] font-bold leading-none">(x)</span>
  </span>
);

// fills shared by the icons
const Patterns = () => (
  <svg className="absolute size-0" aria-hidden="true">
    <defs>
      <radialGradient id="ball" cx="0.5" cy="0.35" r="0.65">
        <stop offset="0" stopColor="#fff020" />
        <stop offset="0.6" stopColor="#f0c030" />
        <stop offset="1" stopColor="#b030f0" />
      </radialGradient>
      <pattern id="weave" width="4" height="4" patternUnits="userSpaceOnUse">
        <path d="M0 0h4v4H0z" fill="#38b0ff" />
        <path d="M0 0h2v2H0zM2 2h2v2H2z" fill="#1828e0" />
      </pattern>
      <pattern id="weaveLight" width="4" height="4" patternUnits="userSpaceOnUse">
        <path d="M0 0h4v4H0z" fill="#d0e0f4" />
        <path d="M0 0h2v2H0zM2 2h2v2H2z" fill="#70d0f0" />
      </pattern>
      <pattern id="teal" width="4" height="4" patternUnits="userSpaceOnUse">
        <path d="M0 0h4v4H0z" fill="#109098" />
        <path d="M0 0h2v2H0zM2 2h2v2H2z" fill="#50c8d0" />
      </pattern>
      <pattern id="dots" width="3" height="3" patternUnits="userSpaceOnUse">
        <path d="M0 0h3v3H0z" fill="#8c8ca0" />
        <path d="M1 1h2v2H1z" fill="#50507c" />
      </pattern>
    </defs>
  </svg>
);

const Triangle = ({ boxed }) => (
  <svg viewBox="0 0 18 10" className={clsx('absolute left-[43px] top-12 h-[10px] w-[18px]', boxed && 'bg-white outline-2 outline-white')} aria-hidden="true">
    <path d="M1 0h17L9 10z" fill="#000" />
  </svg>
);

const Tool = ({ name, label, menu, boxed, width }) => (
  <button
    type="button"
    aria-label={label || name}
    className={clsx('relative flex h-14 shrink-0 items-start text-left', width || (menu ? 'w-[70px]' : 'w-[65px]'))}
  >
    {name === 'formula' ? <FormulaIcon /> : <Icon name={name} />}
    {menu && <Triangle boxed={boxed} />}
  </button>
);

const Grip = ({ className }) => (
  <span className={clsx('h-[37px] w-[4px] shrink-0 border-r border-l-2 border-l-white border-r-[#a8a8b8]', className)} />
);

const Combo = ({ label, width, value = '', disabled, gray, children }) => (
  <label className={clsx('relative block h-[30px] shrink-0', width)}>
    <select
      aria-label={label}
      disabled={disabled}
      defaultValue={value}
      className={clsx(
        'h-full w-full appearance-none border pl-[3px] text-sm text-black opacity-100',
        disabled ? 'border-[#e8e8f0]' : 'border-[#8c8c94]',
        gray ? 'bg-[#e0e0e0]' : 'bg-white'
      )}
    >
      <option value={value}>{value}</option>
    </select>
    <span className="pointer-events-none absolute inset-y-0 left-0 right-5 flex items-center">{children}</span>
    <ChevronDown className={clsx('pointer-events-none absolute right-1 top-2 size-[14px]', disabled ? 'text-[#c0c0c0]' : 'text-[#505050]')} />
  </label>
);

const AppLogo = ({ className }) => (
  <svg viewBox="0 0 20 20" className={className} aria-hidden="true">
    <path d="M0 0h20v20H0z" fill="#0c0a14" />
    <path d="M14 2l3 5-1 9-4-3-4-5 4-1z" fill="#e88838" />
    <path d="M13 6l2 4-1 3-3-4z" fill="#ffe0b0" />
    <path d="M0 2c8 3 11 10 11 18H0z" fill="#1878c0" />
    <path d="M0 8c4 2 6 8 6 12H0z" fill="#80c8f0" />
  </svg>
);

const TitleBar = () => (
  <header className="flex h-8 items-center bg-white pb-1 pl-[6px] text-[15px] text-black">
    <AppLogo className="mr-[6px] size-[17px]" />
    <h1 className="flex-1">CATIA V5 - [Product1]</h1>
    <div className="flex items-center">
      <button type="button" aria-label="Minimize" className="flex w-[54px] justify-center"><Minus size={14} strokeWidth={1.5} /></button>
      <button type="button" aria-label="Maximize" className="flex w-[54px] justify-center"><Square size={13} strokeWidth={2} /></button>
      <button type="button" aria-label="Close" className="flex w-[42px] justify-start pl-[9px]"><X size={18} strokeWidth={1.5} /></button>
    </div>
  </header>
);

const menus = ['开始', 'ENOVIA V5 VPM', '文件', '编辑', '视图', '插入', '工具', '窗口', '帮助'];

const MenuBar = () => (
  <nav className="flex h-[22px] items-center bg-[#d0cfe6] text-sm text-[#202030]">
    <AppLogo className="mr-[2px] h-[18px] w-[19px]" />
    {menus.map((item, i) => (
      <button key={item} type="button" className={clsx('h-full px-2 leading-none', i === 0 && 'bg-[#fde3bd]', i === 1 && 'text-[15px]')}>
        {item}
      </button>
    ))}
    <div className="ml-auto flex items-center gap-3 text-[#505060]">
      <button type="button" aria-label="Minimize document" className="pt-1"><Minus size={10} strokeWidth={3} /></button>
      <button type="button" aria-label="Restore document"><Copy size={11} strokeWidth={3} className="-scale-x-100" /></button>
      <button type="button" aria-label="Close document" className="-mr-1"><X size={12} strokeWidth={3} /></button>
    </div>
  </nav>
);

const TopToolbar = () => (
  <div className="flex h-20 items-start overflow-hidden border-b-[3px] border-[#85858f] bg-linear-to-b from-white from-2% via-[#d0cfe6] via-14% to-[#d0cfe6] pt-1 shadow-[inset_0_-10px_8px_-6px_#9090a0]">
    <div className="flex w-[870px] shrink-0 items-start pl-1">
      <Grip />
      <div className="flex items-center gap-[3px] pt-[21px] pl-2">
        <Combo label="Fill color" width="w-20">
          <span className="ml-2 h-[21px] w-[43px] border-t-2 border-l-2 border-[#787888] bg-[#cfcfff]" />
        </Combo>
        <Combo label="Transparency" width="w-20" value="100%" gray />
        <Combo label="Line thickness" width="w-20" disabled>
          <span className="mx-[3px] flex h-[26px] flex-1 items-center bg-[#f0f0f0] px-1"><span className="h-[2px] w-full bg-[#505050]" /></span>
        </Combo>
        <Combo label="Line type" width="w-20" disabled>
          <span className="mx-[3px] flex h-[26px] flex-1 items-center bg-[#f0f0f0] px-1"><span className="h-[2px] w-full bg-[#505050]" /></span>
        </Combo>
        <Combo label="Symbol" width="w-[51px]" disabled>
          <span className="mx-[2px] flex h-[26px] flex-1 items-center bg-[#f0f0f0]"><X size={18} strokeWidth={2} color="#404040" /></span>
        </Combo>
        <Combo label="Render style" width="w-[52px]">
          <span className="ml-2 h-3 w-3 border-r-2 border-b-2 border-[#303060] bg-linear-to-r from-[#b0b0f0] to-white" />
        </Combo>
        <Combo label="Layer" width="w-20" value="无" />
      </div>
      <div className="flex items-start pt-[11px] pl-[3px]">
        <Tool name="brush" label="Painter" />
        <Tool name="wand" label="Graphic properties wizard" />
      </div>
    </div>
    <Grip className="mr-3" />
    <div className="flex pt-[10px] pl-[3px]">
      <Tool name="repeat" label="Object repetition" menu />
      <Tool name="grid" label="Points and planes" menu />
      <Tool name="catalog" label="Catalog" />
      <Tool name="workSupport" label="Work on support" menu />
      <Tool name="factory" label="Instantiate" menu />
    </div>
  </div>
);

// --- specification tree ---
const TreeIcon = ({ kind }) => (
  <svg viewBox="0 0 36 36" className="mr-[5px] size-9 shrink-0 overflow-visible" fill="none" shapeRendering="crispEdges" aria-hidden="true">
    {kind === 'pub' && (
      <>
        <path d="M4 2h25l5 6v26H4z" fill="#fffce0" stroke="#18b0b8" strokeWidth="3" />
        <path d="M27 2l7 8h-7z" fill="#20c8d8" />
        <path d="M10 28c6 3 8-1 8-6V11M10 15c0-8 16-10 16-2 0 6-6 7-9 6" stroke="#000" strokeWidth="3" />
      </>
    )}
    {kind === 'product' && (
      <>
        <path d="M12 0h17l6 7v22H12z" fill="#fff" />
        <path d="M28 0l8 8h-8z" fill="#18b8c8" />
        <circle cx="8" cy="16" r="8" fill="#0820d0" />
        <circle cx="8" cy="16" r="4" stroke="#60e0ff" strokeWidth="4" strokeDasharray="2 1" />
        <circle cx="20" cy="26" r="7" fill="#18b020" stroke="#084010" strokeWidth="2" strokeDasharray="3 2" />
        <circle cx="19" cy="26" r="2" fill="#e8ffe8" />
        <path d="M1 29h12v6H1z" fill="#001870" stroke="#80d8f8" strokeWidth="2" />
        <path d="M24 35l5-5v-9l3 9 5 4" stroke="#e01020" strokeWidth="4" />
      </>
    )}
    {kind === 'part' && (
      <>
        <path d="M12 0h17l6 7v20H12z" fill="#fff" />
        <path d="M28 0l8 8h-8z" fill="#18b8c8" />
        <circle cx="16" cy="21" r="10" fill="#181040" stroke="#181040" strokeWidth="4" strokeDasharray="4 2" />
        <circle cx="10" cy="23" r="8" fill="#ffe990" />
        <circle cx="10" cy="23" r="9" stroke="#ffe990" strokeWidth="6" strokeDasharray="4 3" />
        <path d="M8 19h4v8H8z" fill="#ffe990" stroke="#201000" strokeWidth="2" />
      </>
    )}
    {kind === 'plane' && (
      <>
        <path d="M0 0h36v36H0z" fill="url(#dots)" />
        <path d="M3 26L12 15h22L26 26z" fill="#c8bc7c" stroke="#404050" strokeDasharray="2 1" />
        <path d="M2 29h24l8-12" stroke="#408090" strokeWidth="2" strokeDasharray="2 1" />
      </>
    )}
    {(kind === 'body' || kind === 'bodyNew') && (
      <>
        <path d="M14 3h14l5 5 2 8-1 12-6 6H14z" fill="#05282c" />
        <path d="M16 3h12M20 9h13M22 16h13M20 23h14M18 30h12" stroke="#10a0a8" strokeWidth="3" />
        <circle cx="14" cy="18" r="10" fill="#20b8a0" />
        <circle cx="14" cy="18" r="12" stroke="#30d8a0" strokeWidth="7" strokeDasharray="5 4" />
        <circle cx="14" cy="18" r="6" fill="#d8f050" stroke="#104040" strokeWidth="2" />
        <path d="M12 15h4v6h-4z" fill="#104040" />
      </>
    )}
    {kind === 'bodyNew' && (
      <>
        <circle cx="27" cy="27" r="9" fill="#0828e0" />
        <circle cx="27" cy="27" r="5" fill="#0828e0" stroke="#80d8ff" strokeWidth="3" strokeDasharray="2 2" />
        <path d="M31-1v10M26 4h10" stroke="#fff000" strokeWidth="4" />
      </>
    )}
    {kind === 'pad' && (
      <>
        <path d="M8 5l5-4h21v28l-5 5H8z" fill="#181050" />
        <path d="M9 6h19v26H9z" fill="#fff" />
        <path d="M2 18l7-8h12v10l-7 11H2z" fill="#181050" />
        <path d="M5 18l5-7h6l-5 7zM4 20h8v8H4z" fill="#fff078" />
      </>
    )}
    {kind === 'sketch' && (
      <>
        <path d="M0 0h36v36H0z" fill="url(#dots)" />
        <path d="M4 8h22l8 24H4z" fill="#c8ccd8" fillOpacity="0.6" stroke="#303050" strokeDasharray="2 1" />
        <path d="M16 26L27 3" stroke="#303050" strokeWidth="5" strokeDasharray="3 1" />
        <path d="M18 20L26 5" stroke="#d8d080" strokeWidth="2" />
        <path d="M3 34h31" stroke="#408890" strokeWidth="3" strokeDasharray="2 2" />
      </>
    )}
    {kind === 'solid' && (
      <>
        <path d="M2 8l6-6h26v26l-5 5H2z" fill="#606060" stroke="#000" strokeWidth="2" />
        <path d="M2 8h26v26H2z" fill="#888" stroke="#000" strokeWidth="2" />
        <path d="M28 8l6-6" stroke="#000" strokeWidth="2" />
        <path d="M1 34v-6c2-8 12-8 14-1 0 4-5 4-7 3M8 24v11" stroke="#009898" strokeWidth="3" />
      </>
    )}
  </svg>
);

const indents = ['pl-[3px]', 'pl-[34px]', 'pl-[66px]', 'pl-[97px]', 'pl-[129px]'];

const rows = [
  { depth: 1, ball: '-', text: '发布' },
  { depth: 2, icon: 'pub', text: '零件几何体' },
  { depth: 2, icon: 'pub', text: '提取.1' },
  { depth: 0, ball: '-', icon: 'product', text: 'Part2 (Part2.1)' },
  { depth: 1, ball: '-', icon: 'part', text: 'Part2', look: 'edit' },
  { depth: 2, icon: 'plane', text: 'xy 平面' },
  { depth: 2, icon: 'plane', text: 'yz 平面' },
  { depth: 2, icon: 'plane', text: 'zx 平面' },
  { depth: 2, ball: '-', icon: 'body', text: '零件几何体' },
  { depth: 3, ball: '-', icon: 'pad', text: '凸台.11' },
  { depth: 4, ball: '+', icon: 'sketch', text: '草图.11' },
  { depth: 2, ball: '-', icon: 'bodyNew', text: '几何体.17', look: 'work' },
  { depth: 3, icon: 'solid', text: '实体.47(..!Part1.1!零件几何体)', look: 'selected' },
  { depth: 0, text: 'Applications' },
];

const Ball = ({ sign }) => (
  <svg viewBox="0 0 20 20" className="size-5" aria-hidden="true">
    <circle cx="10" cy="10" r="10" fill="#8a8a8a" />
    <circle cx="8" cy="7" r="5" fill="#b8b8b8" />
    <path d="M3 10h14" stroke="#000" strokeWidth="4" />
    {sign === '+' && <path d="M10 3v14" stroke="#000" strokeWidth="4" />}
  </svg>
);

// Han characters are set light, the rest regular
const Label = ({ text }) =>
  text.split(/([\u4e00-\u9fff]+)/).filter(Boolean).map((part, i) => (
    <span key={i} className={/[\u4e00-\u9fff]/.test(part) ? 'font-light' : 'font-normal'}>{part}</span>
  ));

const SpecTree = ({ selected, onSelect }) => (
  <div className="relative w-fit pt-2 font-['Noto_Sans','Noto_Sans_CJK_SC',sans-serif] text-2xl text-white">
    {/* branch lines, drawn below the rows */}
    <svg className="absolute inset-0 h-full w-full" fill="none" stroke="#fff" strokeWidth="2" shapeRendering="crispEdges" aria-hidden="true">
      <path d="M13 0v603h18M44 0v31h18M76 46v73h20M76 75h20" />
      <path d="M13 163h20M44 163v44h20M76 207v308M76 251h20M76 295h20M76 339h20M76 383h20M76 515h20" />
      <path d="M107 383v44h20M139 427v44h20M107 515v44h20" />
    </svg>
    <ul className="relative">
      {rows.map((row, i) => (
        <li key={i} className={clsx('flex h-11 items-center', indents[row.depth])}>
          <span className="w-7 shrink-0">{row.ball && <Ball sign={row.ball} />}</span>
          {row.icon && <TreeIcon kind={row.icon} />}
          <button
            type="button"
            onClick={() => onSelect(i)}
            className={clsx(
              'h-[33px] whitespace-pre rounded-xs px-px leading-8',
              row.look === 'edit' && 'border-t-2 border-l-2 border-white bg-[#0a64ff] leading-7',
              row.look === 'work' && 'bg-[#333366] underline decoration-2 underline-offset-4',
              !row.look && i !== 0 && 'bg-[#333366]',
              row.look === 'selected' && (selected === i ? 'bg-[#ff8000]' : 'bg-[#333366]')
            )}
          >
            <Label text={row.text} />
          </button>
        </li>
      ))}
    </ul>
  </div>
);

const Scene = () => (
  <svg viewBox="0 0 1453 693" className="absolute inset-0 h-full w-full" fill="none" aria-hidden="true">
    {/* solid */}
    <path d="M604 240L1214 345 1206 368 580 257z" fill="#bcbbe2" />
    <path d="M580 257L1206 368 1187 490 585 365z" fill="#9d9cbe" />
    <path d="M604 240L1214 345 1195 466 1187 490" stroke="#ff8410" strokeWidth="2" />
    <path d="M580 257L604 240" stroke="#ff8410" strokeWidth="3" />
    <path d="M581 258L1206 368 1186 489 586 365z" stroke="#ff8410" strokeWidth="4" strokeLinejoin="round" />
    <path d="M1212 352L1192 468" stroke="#ff8410" strokeWidth="2" />
    <path d="M718 393L984 447" stroke="#e08c48" strokeWidth="4" />
    <path d="M710 283V388M715 285V390" stroke="#ff8410" strokeWidth="3" />
    <path d="M704 280q5 2 5 9M722 283q-6 2-6 9M704 388q5-2 5-9M722 392q-6-4-6-10" stroke="#ff8410" strokeWidth="2" />
    <path d="M996 337L987 444" stroke="#ff8410" strokeWidth="4" />
    <path d="M989 333q6 2 7 8M1003 335q-6 2-7 8M979 442q6-2 8-8M993 446q-6-3-6-10M1194 368q7 2 6 10M1181 488q6-1 7-8" stroke="#ff8410" strokeWidth="2" />
    {/* compass */}
    <g stroke="#dccfff" strokeWidth="2" fill="#1e4560">
      <path d="M1332 35C1318 46 1311 78 1311 102L1332 82 1380 90C1382 66 1358 38 1332 35z" />
      <path d="M1297 126L1318 105 1368 114C1374 120 1372 130 1362 132 1340 139 1308 137 1297 126z" />
      <path d="M1332 22V115" strokeWidth="3" />
    </g>
    <circle cx="1332" cy="22" r="4" fill="#dccfff" />
    <path d="M1327 114h11v11h-11z" fill="#d80000" />
    <g fill="#e8e020" className="font-['Noto_Sans',sans-serif] text-[17px]">
      <text x="1336" y="28">z</text>
      <text x="1383" y="98">y</text>
      <text x="1317" y="108">x</text>
    </g>
    {/* screen axis */}
    <path d="M1416 641v20l20 4M1416 661l-8 5" stroke="#f0f0f8" strokeWidth="1" />
    <g fill="#f4f4fa" className="font-['Noto_Sans',sans-serif] text-[15px]">
      <text x="1414" y="637">z</text>
      <text x="1401" y="671">x</text>
      <text x="1436" y="668">y</text>
    </g>
  </svg>
);

const Viewport = () => {
  const [selected, setSelected] = useState(12);

  return (
    <main className="relative min-w-0 flex-1 overflow-hidden bg-linear-to-b from-[#333364] via-[#4a4877] via-60% to-[#b0aec2]">
      <Scene />
      <SpecTree selected={selected} onSelect={setSelected} />
      {/* mouse pointer */}
      <svg viewBox="0 0 12 20" className="absolute left-[292px] top-[601px] h-5 w-3 overflow-visible" aria-hidden="true">
        <path d="M0 0v16l4-4 3 7 3-1-3-7h5z" fill="#fff" stroke="#000" />
      </svg>
    </main>
  );
};

const SideScroll = () => (
  <div className="flex w-4 shrink-0 flex-col border-r border-[#303070] bg-[#5a5ab4]">
    <button type="button" aria-label="Scroll up" className="flex h-[17px] items-center justify-center bg-[#7878f8]">
      <svg viewBox="0 0 12 12" className="size-3"><path d="M6 0l6 12H0z" /></svg>
    </button>
    <div className="flex-[283] border-b border-[#b0b0ff]" />
    <div className="flex-[377] bg-[#7a7aff]" />
    <button type="button" aria-label="Scroll down" className="flex h-[17px] items-center justify-center border-t border-[#303070] bg-[#7878f8]">
      <svg viewBox="0 0 12 12" className="size-3"><path d="M0 0h12L6 12z" /></svg>
    </button>
  </div>
);

// --- right panel ---
const Sep = ({ className = 'w-9' }) => (
  <span className={clsx('h-[3px] shrink-0 border-t-2 border-b border-t-white border-b-[#a0a0a8]', className)} />
);

const SideTool = ({ name, menu, active }) => (
  <button
    type="button"
    aria-label={name}
    className={clsx('relative mb-[10px] ml-2 flex w-12 shrink-0 items-start', menu && 'h-[60px]', active && 'h-12 bg-[#bcbcbc] outline-4 outline-[#bcbcbc]', !menu && !active && 'h-[55px]')}
  >
    <Icon name={name} />
    {menu && <Triangle />}
  </button>
);

const RightPanel = () => (
  <aside className="flex w-[315px] shrink-0 overflow-hidden border-l-[3px] border-white bg-[#d0cfe6] pl-[3px]">
    <div className="flex w-[81px] shrink-0 flex-col pt-[18px]">
      <Sep className="mb-[14px] w-9" />
      <SideTool name="puzzle" menu />
      <SideTool name="split" menu />
      <SideTool name="extract" menu />
      <SideTool name="boundary" menu />
      <SideTool name="symmetry" menu />
      <SideTool name="extrapolate" menu />
      <SideTool name="solid" active />
    </div>
    <div className="flex w-[81px] shrink-0 flex-col pt-[5px]">
      <Sep className="mb-4 w-9" />
      <SideTool name="point" menu />
      <SideTool name="line" menu />
      <SideTool name="plane" menu />
      <Sep className="-mt-1 mb-3 w-[74px]" />
      <SideTool name="sweep" menu />
      <SideTool name="join" />
      <SideTool name="offset" menu />
      <Sep className="-mt-1 mb-[10px] w-[74px]" />
      <SideTool name="circle" menu />
      <SideTool name="spline" menu />
    </div>
    <div className="flex w-[82px] shrink-0 flex-col pt-[30px]">
      <Sep className="mb-[14px] w-9" />
      <SideTool name="sketch" menu />
      <Sep className="mt-1 mb-3 w-9" />
      <SideTool name="law" />
      <Sep className="mt-1 mb-4 w-9" />
      <SideTool name="extrude" menu />
      <SideTool name="thick" menu />
      <SideTool name="sweptSurface" menu />
      <SideTool name="fill" />
      <SideTool name="blend" />
      <SideTool name="multiSection" />
    </div>
    <div className="flex w-[81px] shrink-0 flex-col pt-1">
      <Sep className="mb-4 w-9" />
      <SideTool name="workbench" />
      <Sep className="mt-1 mb-4 w-9" />
      <SideTool name="diskNew" />
      <SideTool name="diskLink" />
      <SideTool name="diskOpen" />
      <SideTool name="diskSave" />
      <Sep className="mt-1 mb-4 w-9" />
      <SideTool name="select" menu />
      <SideTool name="selectAll" menu />
      <Sep className="mb-4 w-9" />
      <SideTool name="sparkle" />
      <Sep />
    </div>
  </aside>
);

const DassaultLogo = () => (
  <div className="relative flex h-full w-[46px] shrink-0 flex-col items-end pt-1">
    <svg viewBox="0 0 46 26" className="h-[26px] w-[46px] overflow-visible" fill="none" aria-hidden="true">
      <path d="M12-1c8-2 11 3 2 9" stroke="#e03040" strokeWidth="2" />
      <path d="M4 14c10-3 12 1 8 6-3 4-8 5-12 5 2-3 5-7 6-10" stroke="#404080" strokeWidth="3" />
      <path d="M28 8c-8-2-11 3-6 7s2 8-7 7" stroke="#f0a020" strokeWidth="3" />
    </svg>
    <span className="text-xs font-bold italic leading-3 text-[#404080]">CATIA</span>
  </div>
);

const BottomToolbars = () => (
  <footer className="flex h-40 shrink-0 flex-col overflow-hidden border-b border-[#606070] bg-[#d0cfe6] shadow-[inset_0_8px_5px_-3px_#ffffff,inset_0_-10px_8px_-6px_#9090a0]">
    <div className="flex h-[85px] items-start">
      <div className="mr-[6px] ml-auto flex items-start pt-[6px]">
        <Grip className="mr-3" />
        <div className="flex gap-px pt-[9px]">
          <Tool name="fly" />
          <Tool name="fit" />
          <Tool name="pan" />
          <Tool name="rotate" />
          <Tool name="zoomIn" />
          <Tool name="zoomOut" />
          <Tool name="normalView" />
          <Tool name="multiView" />
          <Tool name="isoView" menu />
          <Tool name="shading" menu boxed />
          <Tool name="hideShow" />
          <Tool name="swapSpace" />
        </div>
      </div>
      <DassaultLogo />
    </div>
    <div className="flex items-start pl-[2px]">
      <Grip className="mr-[14px]" />
      <div className="flex pt-[11px]">
        <Tool name="newFile" />
        <Tool name="open" />
        <Tool name="save" />
        <Tool name="print" />
        <Tool name="cut" />
        <Tool name="copy" />
        <Tool name="paste" />
        <Tool name="undo" menu />
        <Tool name="redo" menu />
        <Tool name="whatsThis" />
      </div>
      <Grip className="mr-3 ml-2" />
      <div className="flex pt-[11px]">
        <Tool name="formula" />
        <Tool name="comment" width="w-[59px]" />
        <Tool name="traffic" width="w-[59px]" />
        <Tool name="table" menu />
        <Tool name="structure" />
        <Tool name="lock" menu />
        <Tool name="equivalent" />
      </div>
      <Grip className="mx-[6px]" />
      <div className="flex pt-[11px] pl-2">
        <Tool name="translate" />
      </div>
      <Grip className="ml-[3px] mr-3" />
      <div className="flex pt-[11px]">
        <Tool name="measure" />
        <Tool name="measureItem" />
        <Tool name="inertia" />
      </div>
      <Grip className="mr-4 ml-1" />
      <div className="flex pt-[11px]">
        <Tool name="camera" />
      </div>
      <Grip className="mr-4 ml-1" />
      <div className="flex pt-[11px]">
        <Tool name="update" />
        <Tool name="manualUpdate" />
        <Tool name="axis" />
      </div>
      <span className="ml-auto text-lg leading-4 text-white">»</span>
    </div>
  </footer>
);

const StatusBar = () => (
  <div className="flex h-[29px] shrink-0 items-center border-b-2 border-[#8a9a90] bg-[#d0cfe6] text-sm text-[#202030]">
    <p className="flex-1 pl-px">实体.47/几何体.17/Part2 选定</p>
    <input type="text" aria-label="Power input" className="h-[25px] w-[350px] border border-[#808088] bg-white px-1" />
    <button type="button" aria-label="Power input mode" className="flex h-[25px] w-[39px] items-center justify-center border-2 border-t-white border-l-white border-r-[#808088] border-b-[#808088]">
      <svg viewBox="0 0 18 16" className="h-4 w-[18px]" fill="none" stroke="#a0a0a8" strokeWidth="2" aria-hidden="true">
        <path d="M2 4h8v7H2zM17 1v14H1M12 12h2" />
      </svg>
    </button>
    <button type="button" aria-label="Information" className="flex h-[25px] w-8 items-center justify-end border-t-2 border-l-2 border-b-2 border-t-white border-l-white border-b-[#808088] pr-[3px]">
      <svg viewBox="0 0 18 16" className="h-4 w-[18px]" fill="none" aria-hidden="true">
        <path d="M17 1v15H2" stroke="#303030" strokeWidth="2" />
        <path d="M5 2h7l3 3v5l-3 3-2 2-2-2H5L2 10V5z" fill="#fff" stroke="#404040" />
        <path d="M9 4v2M7 7h2v4M7 11h5" stroke="#1080d0" strokeWidth="2" />
      </svg>
    </button>
  </div>
);

export default function App() {
  return (
    <div className="flex min-h-screen flex-col overflow-hidden bg-[#a5bba5] font-['Noto_Sans','Noto_Sans_CJK_SC',sans-serif]">
      <Patterns />
      <TitleBar />
      <MenuBar />
      <TopToolbar />
      <div className="flex flex-1">
        <SideScroll />
        <Viewport />
        <RightPanel />
      </div>
      <BottomToolbars />
      <StatusBar />
      <div className="h-[63px] shrink-0" />
    </div>
  );
}
